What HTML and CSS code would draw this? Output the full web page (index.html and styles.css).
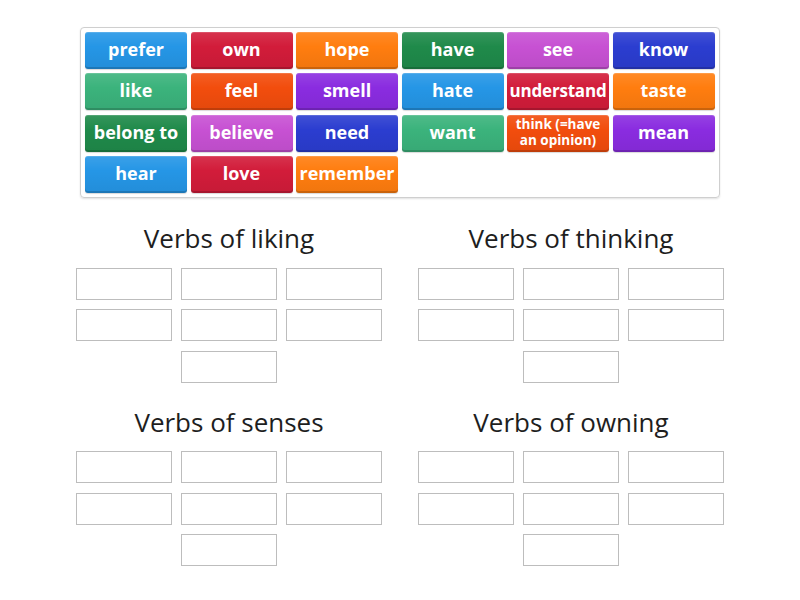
FILE: index.html
```html
<!DOCTYPE html>
<html>
<head>
<meta charset="utf-8">
<link rel="stylesheet" href="styles.css">
</head>
<body>
<div class="page">
  <div class="bank">
    <div class="tile c1">prefer</div>
    <div class="tile c2">own</div>
    <div class="tile c3">hope</div>
    <div class="tile c4">have</div>
    <div class="tile c5">see</div>
    <div class="tile c6">know</div>
    <div class="tile c7">like</div>
    <div class="tile c8">feel</div>
    <div class="tile c9">smell</div>
    <div class="tile c1">hate</div>
    <div class="tile c2 tight">understand</div>
    <div class="tile c3">taste</div>
    <div class="tile c4">belong to</div>
    <div class="tile c5">believe</div>
    <div class="tile c6">need</div>
    <div class="tile c7">want</div>
    <div class="tile c8 small">think (=have<br>an opinion)</div>
    <div class="tile c9">mean</div>
    <div class="tile c1">hear</div>
    <div class="tile c2">love</div>
    <div class="tile c3">remember</div>
  </div>

  <div class="groups">
    <div class="group">
      <h2 class="title">Verbs of liking</h2>
      <div class="slots">
        <div class="slot"></div><div class="slot"></div><div class="slot"></div>
        <div class="slot"></div><div class="slot"></div><div class="slot"></div>
        <div class="slot mid"></div>
      </div>
    </div>
    <div class="group">
      <h2 class="title">Verbs of thinking</h2>
      <div class="slots">
        <div class="slot"></div><div class="slot"></div><div class="slot"></div>
        <div class="slot"></div><div class="slot"></div><div class="slot"></div>
        <div class="slot mid"></div>
      </div>
    </div>
    <div class="group">
      <h2 class="title">Verbs of senses</h2>
      <div class="slots">
        <div class="slot"></div><div class="slot"></div><div class="slot"></div>
        <div class="slot"></div><div class="slot"></div><div class="slot"></div>
        <div class="slot mid"></div>
      </div>
    </div>
    <div class="group">
      <h2 class="title">Verbs of owning</h2>
      <div class="slots">
        <div class="slot"></div><div class="slot"></div><div class="slot"></div>
        <div class="slot"></div><div class="slot"></div><div class="slot"></div>
        <div class="slot mid"></div>
      </div>
    </div>
  </div>
</div>
</body>
</html>
```

FILE: styles.css
```css
* { box-sizing: border-box; }
html, body { margin: 0; padding: 0; background: #fff; }
body { font-family: "Open Sans", "Liberation Sans", sans-serif; color: #222; }

.page {
  width: 800px;
  height: 600px;
  padding-top: 27px;
  display: flex;
  flex-direction: column;
  align-items: center;
}

.bank {
  width: 640px;
  border: 1px solid #cfcfcf;
  border-radius: 4px;
  box-shadow: 0 1px 2px rgba(0,0,0,0.12);
  padding: 4px;
  display: grid;
  grid-template-columns: repeat(6, 102px);
  grid-auto-rows: 37px;
  column-gap: 3.5px;
  row-gap: 4.3px;
}

.tile {
  border-radius: 3px;
  color: #fff;
  font-weight: 700;
  font-size: 18px;
  display: flex;
  align-items: center;
  justify-content: center;
  text-align: center;
  white-space: nowrap;
  background-image: linear-gradient(to bottom, rgba(255,255,255,0.10), rgba(255,255,255,0) 40%, rgba(0,0,0,0.06));
  box-shadow: inset 0 -2px 0 rgba(0,0,0,0.16), inset 0 1px 0 rgba(255,255,255,0.15), 0 1px 1px rgba(0,0,0,0.15);
  padding-bottom: 3px;
}
.tile.tight { font-size: 17px; letter-spacing: -0.2px; }
.tile.small { font-size: 13.5px; line-height: 16px; padding-bottom: 2px; }

.c1 { background-color: #2596e6; }
.c2 { background-color: #d21c3a; }
.c3 { background-color: #ff7d0f; }
.c4 { background-color: #1f8a4a; }
.c5 { background-color: #c751d3; }
.c6 { background-color: #2b3dd0; }
.c7 { background-color: #3bb37c; }
.c8 { background-color: #f24d0d; }
.c9 { background-color: #8a2ce0; }

.groups {
  margin-top: 25.5px;
  display: grid;
  grid-template-columns: 306px 306px;
  column-gap: 36px;
  row-gap: 24px;
}

.group {
  display: flex;
  flex-direction: column;
  align-items: center;
}

.title {
  margin: 0 0 14.5px 0;
  font-size: 26px;
  line-height: 30px;
  font-weight: 400;
  color: #1e1e1e;
}

.slots {
  display: grid;
  grid-template-columns: repeat(3, 96px);
  grid-auto-rows: 32px;
  column-gap: 9px;
  row-gap: 9.5px;
}

.slot {
  border: 1px solid #bdbdbd;
  background: #fff;
}
.slot.mid { grid-column: 2; }
```
